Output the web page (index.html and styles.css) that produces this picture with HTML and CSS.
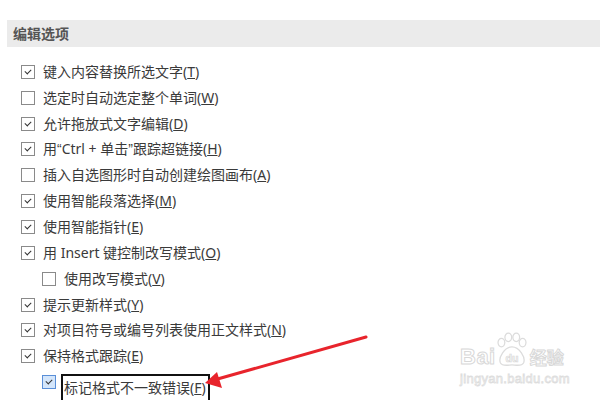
FILE: index.html
```html
<!DOCTYPE html>
<html lang="zh-CN">
<head>
<meta charset="utf-8">
<link rel="stylesheet" href="styles.css">
</head>
<body>
<div class="page">
  <div class="section-title">编辑选项</div>
  <ul class="options">
    <li class="opt"><span class="box checked"></span><span class="label">键入内容替换所选文字(<u>T</u>)</span></li>
    <li class="opt"><span class="box"></span><span class="label">选定时自动选定整个单词(<u>W</u>)</span></li>
    <li class="opt"><span class="box checked"></span><span class="label">允许拖放式文字编辑(<u>D</u>)</span></li>
    <li class="opt"><span class="box checked"></span><span class="label">用<span class="q">“</span>Ctrl + 单击<span class="q">”</span>跟踪超链接(<u>H</u>)</span></li>
    <li class="opt"><span class="box"></span><span class="label">插入自选图形时自动创建绘图画布(<u>A</u>)</span></li>
    <li class="opt"><span class="box checked"></span><span class="label">使用智能段落选择(<u>M</u>)</span></li>
    <li class="opt"><span class="box checked"></span><span class="label">使用智能指针(<u>E</u>)</span></li>
    <li class="opt"><span class="box checked"></span><span class="label">用 Insert 键控制改写模式(<u>O</u>)</span></li>
    <li class="opt sub"><span class="box"></span><span class="label">使用改写模式(<u>V</u>)</span></li>
    <li class="opt"><span class="box checked"></span><span class="label">提示更新样式(<u>Y</u>)</span></li>
    <li class="opt"><span class="box checked"></span><span class="label">对项目符号或编号列表使用正文样式(<u>N</u>)</span></li>
    <li class="opt"><span class="box checked"></span><span class="label">保持格式跟踪(<u>E</u>)</span></li>
    <li class="opt sub last"><span class="box checked focus"></span><span class="label framed">标记格式不一致错误(<u>F</u>)</span></li>
  </ul>

  <svg class="arrow" width="600" height="400" viewBox="0 0 600 400">
    <line x1="366" y1="337" x2="214" y2="380" stroke="#e8242c" stroke-width="3" stroke-linecap="round"/>
    <polygon points="205,383 217,372 222,388" fill="#e8242c"/>
  </svg>

  <div class="watermark">
    <div class="wm-logo">
      <span class="wm-bai">Bai</span>
      <span class="wm-paw">
        <svg width="36" height="36" viewBox="0 0 34 34">
          <g fill="none" stroke="#dcdcdc" stroke-width="1.2">
            <ellipse cx="7" cy="10" rx="3.2" ry="4"/>
            <ellipse cx="13.5" cy="5" rx="3.2" ry="4"/>
            <ellipse cx="21" cy="5" rx="3.2" ry="4"/>
            <ellipse cx="27" cy="10" rx="3.2" ry="4"/>
            <path d="M17 14 C10 14 4 24 6 29 C8 33 14 31 17 31 C20 31 26 33 28 29 C30 24 24 14 17 14 Z"/>
          </g>
          <text x="17" y="28" text-anchor="middle" class="wm-du">du</text>
        </svg>
      </span>
      <span class="wm-jy">经验</span>
    </div>
    <div class="wm-url">jingyan.baidu.com</div>
  </div>
</div>
</body>
</html>
```

FILE: styles.css
```css
html, body {
  margin: 0;
  padding: 0;
  background: #ffffff;
}

.page {
  position: relative;
  width: 600px;
  height: 400px;
  overflow: hidden;
  font-family: "Noto Sans", "Noto Sans CJK SC", sans-serif;
  font-size: 14px;
  color: #3a3a3a;
}

.section-title {
  margin: 20px 0 0 7px;
  height: 27px;
  line-height: 27px;
  padding-left: 6px;
  background: #ebebeb;
  color: #555555;
  font-family: "Noto Sans CJK SC", sans-serif;
  font-weight: bold;
  font-size: 14px;
}

.options {
  list-style: none;
  margin: 12px 0 0 0;
  padding: 0 0 0 21px;
}

.opt {
  display: flex;
  align-items: center;
  height: 25.85px;
  white-space: nowrap;
}

.opt.sub {
  padding-left: 21px;
}

.box {
  position: relative;
  flex: none;
  width: 12px;
  height: 12px;
  border: 1px solid #8a8a8a;
  background: #ffffff;
  margin-right: 8px;
}

.box.checked::after {
  content: "";
  position: absolute;
  left: 3px;
  top: 3px;
  width: 5px;
  height: 3px;
  border-left: 1.6px solid #333333;
  border-bottom: 1.6px solid #333333;
  transform: rotate(-45deg);
  transform-origin: center;
}

.box.focus {
  border-color: #5a8fd8;
  background: #d4e6fb;
}

.label {
  line-height: 20px;
}

.q {
  font-family: "Liberation Sans", sans-serif;
}

.label u {
  text-decoration: underline;
  text-underline-offset: 1px;
}

.opt.last .box {
  margin-right: 5px;
}

.label.framed {
  border: 2px solid #111111;
  padding: 2px 2px 4px 1px;
  margin-top: 12px;
  line-height: 19px;
}

.arrow {
  position: absolute;
  left: 0;
  top: 0;
  pointer-events: none;
}

.watermark {
  position: absolute;
  left: 460px;
  top: 332px;
  width: 110px;
  font-family: "Liberation Sans", "Noto Sans CJK SC", sans-serif;
}

.wm-logo {
  display: flex;
  align-items: flex-end;
  height: 36px;
}

.wm-bai {
  font-size: 22px;
  font-weight: bold;
  color: #ffffff;
  -webkit-text-stroke: 1px #d8d8d8;
  line-height: 22px;
  letter-spacing: 0.5px;
}

.wm-paw {
  display: block;
  width: 36px;
  height: 36px;
  margin-left: -2px;
}

.wm-du {
  font-family: "Liberation Sans", sans-serif;
  font-size: 10px;
  font-weight: bold;
  fill: #ffffff;
  stroke: #d8d8d8;
  stroke-width: 0.7;
}

.wm-jy {
  font-family: "Noto Sans CJK SC", sans-serif;
  font-size: 17px;
  font-weight: bold;
  color: #ffffff;
  -webkit-text-stroke: 1px #d8d8d8;
  line-height: 22px;
}

.wm-url {
  margin-top: 3px;
  font-size: 13px;
  color: #ffffff;
  -webkit-text-stroke: 0.8px #dddddd;
  letter-spacing: 0.3px;
}
```
